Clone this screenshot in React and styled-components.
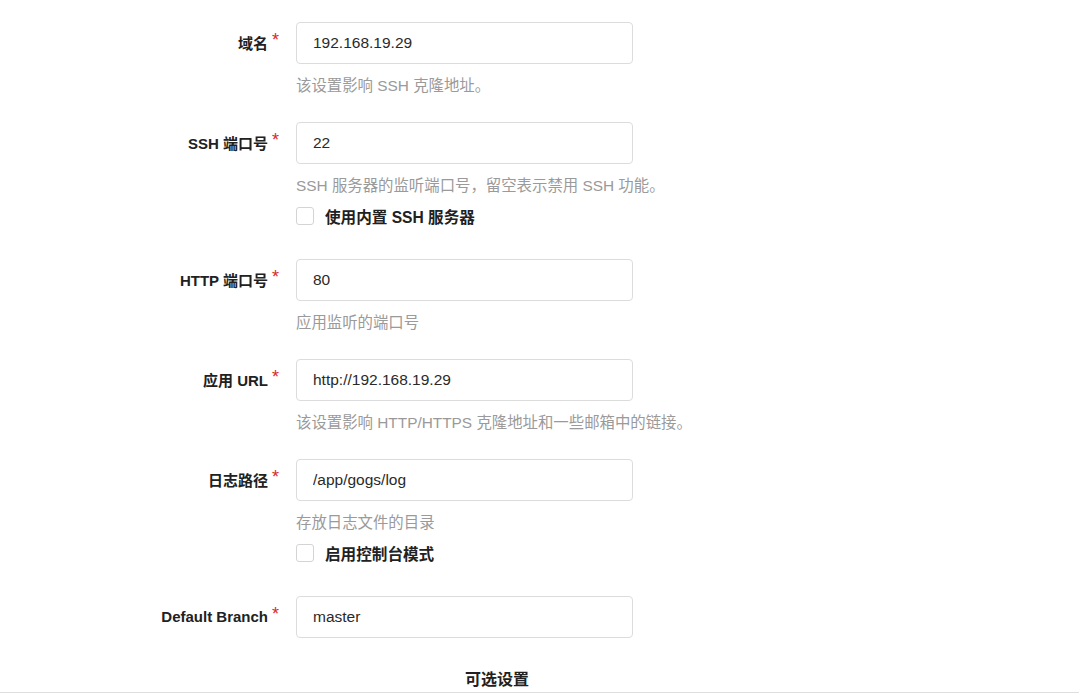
import React from 'react';
import styled, { createGlobalStyle } from 'styled-components';

const GlobalStyle = createGlobalStyle`
  body {
    margin: 0;
    background: #fff;
    font-family: "Liberation Sans", Arial, "Noto Sans CJK SC", sans-serif;
    color: #212121;
  }
`;

const Page = styled.div`
  padding-top: 22px;
`;

const Field = styled.div`
  display: grid;
  grid-template-columns: 268px 337px;
  column-gap: 28px;
  margin-bottom: 26px;
`;

const Label = styled.label`
  position: relative;
  height: 41px;
  display: flex;
  align-items: center;
  justify-content: flex-end;
  font-size: 15px;
  font-weight: bold;
  color: #212121;
  white-space: nowrap;

  &::after {
    content: '*';
    position: absolute;
    left: calc(100% + 4px);
    top: 8px;
    font-size: 18px;
    font-weight: normal;
    color: #db2828;
  }
`;

const Control = styled.div`
  display: flex;
  flex-direction: column;
`;

const Input = styled.input`
  box-sizing: border-box;
  width: 337px;
  height: 42px;
  padding: 0 16px;
  border: 1px solid #dcdcdc;
  border-radius: 4px;
  font-family: "Liberation Sans", Arial, sans-serif;
  font-size: 15.5px;
  color: #2a2a2a;
  outline: none;
`;

const Help = styled.div`
  margin-top: 12px;
  line-height: 20px;
  font-size: 15.4px;
  color: #9a9a9a;
  white-space: nowrap;
`;

const CheckRow = styled.label`
  display: flex;
  align-items: center;
  gap: 11px;
  height: 20px;
  margin-top: 10px;
  margin-bottom: 7px;
  font-size: 15.6px;
  font-weight: bold;
  color: #212121;
  white-space: nowrap;
`;

const Box = styled.span`
  box-sizing: border-box;
  width: 18px;
  height: 18px;
  border: 1px solid #d4d4d5;
  border-radius: 3px;
  background: #fff;
`;

const Divider = styled.h4`
  margin: 31px 0 0;
  padding-bottom: 1px;
  border-bottom: 1px solid #dedede;
`;

const DividerText = styled.span`
  display: block;
  width: 994px;
  text-align: center;
  line-height: 22px;
  font-size: 16px;
  font-weight: bold;
  color: #212121;
`;

const fields = [
  { label: '域名', value: '192.168.19.29', help: '该设置影响 SSH 克隆地址。' },
  {
    label: 'SSH 端口号',
    value: '22',
    help: 'SSH 服务器的监听端口号，留空表示禁用 SSH 功能。',
    check: '使用内置 SSH 服务器',
  },
  { label: 'HTTP 端口号', value: '80', help: '应用监听的端口号' },
  { label: '应用 URL', value: 'http://192.168.19.29', help: '该设置影响 HTTP/HTTPS 克隆地址和一些邮箱中的链接。' },
  { label: '日志路径', value: '/app/gogs/log', help: '存放日志文件的目录', check: '启用控制台模式' },
  { label: 'Default Branch', value: 'master' },
];

const App = () => {
  return (
    <Page>
      <GlobalStyle />
      {fields.map((f) => (
        <Field key={f.label}>
          <Label>{f.label}</Label>
          <Control>
            <Input type="text" defaultValue={f.value} />
            {f.help && <Help>{f.help}</Help>}
            {f.check && (
              <CheckRow>
                <Box />
                {f.check}
              </CheckRow>
            )}
          </Control>
        </Field>
      ))}
      <Divider>
        <DividerText>可选设置</DividerText>
      </Divider>
    </Page>
  );
};

export default App;
